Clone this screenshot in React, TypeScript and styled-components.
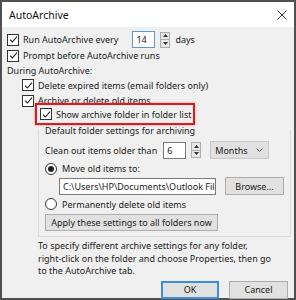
import React from "react";
import styled, { createGlobalStyle } from "styled-components";

const Global = createGlobalStyle`
  html, body { margin: 0; padding: 0; background: #fff; }
  body { font-family: "Noto Sans", "Open Sans", sans-serif; }
`;

const Dialog = styled.div`
  width: 296px;
  height: 300px;
  box-sizing: border-box;
  border: 2px solid #505050;
  background: #f0f0f0;
  display: flex;
  flex-direction: column;
  font-size: 9px;
  color: #1b1b1b;
`;

const TitleBar = styled.div`
  height: 25px;
  background: #fff;
  display: flex;
  align-items: center;
  justify-content: space-between;
  padding: 0 7px 0 7px;
  font-size: 10.5px;
  color: #111;
  flex-shrink: 0;
`;

const Body = styled.div`
  display: flex;
  flex-direction: column;
  padding: 4px 0 0 5px;
`;

const Row = styled.div<{ $indent?: number; $h?: number; $mt?: number }>`
  display: flex;
  align-items: center;
  height: ${(p) => p.$h ?? 16}px;
  margin-left: ${(p) => p.$indent ?? 0}px;
  margin-top: ${(p) => p.$mt ?? 0}px;
  white-space: nowrap;
  gap: 3px;
`;

const Box = styled.span`
  width: 10px;
  height: 10px;
  border: 1px solid #333;
  background: #fff;
  display: inline-flex;
  align-items: center;
  justify-content: center;
  flex-shrink: 0;
  margin-right: 1px;
`;

const Radio = styled.span<{ $on?: boolean }>`
  width: 10px;
  height: 10px;
  border: 1px solid #333;
  border-radius: 50%;
  background: #fff;
  display: inline-flex;
  align-items: center;
  justify-content: center;
  flex-shrink: 0;
  margin-right: 2px;
  &::after {
    content: "";
    display: ${(p) => (p.$on ? "block" : "none")};
    width: 6px;
    height: 6px;
    border-radius: 50%;
    background: #222;
  }
`;

const Check = () => (
  <Box>
    <svg width="9" height="9" viewBox="0 0 9 9">
      <path d="M1 4.6 L3.4 7 L8 1.6" fill="none" stroke="#222" strokeWidth="1.1" />
    </svg>
  </Box>
);

const Input = styled.div<{ $w: number; $focus?: boolean }>`
  width: ${(p) => p.$w}px;
  height: 17px;
  box-sizing: border-box;
  border: 1px solid ${(p) => (p.$focus ? "#5b9bd5" : "#7a7a7a")};
  background: #fff;
  display: flex;
  align-items: center;
  padding-left: 3px;
  overflow: hidden;
  white-space: nowrap;
  flex-shrink: 0;
`;

const Spin = styled.div`
  width: 10px;
  height: 16px;
  box-sizing: border-box;
  border: 1px solid #adadad;
  background: #e8e8e8;
  display: flex;
  flex-direction: column;
  margin-left: 2px;
`;

const SpinHalf = styled.div`
  flex: 1;
  display: flex;
  align-items: center;
  justify-content: center;
  & + & { border-top: 1px solid #adadad; }
`;

const Spinner = () => (
  <Spin>
    <SpinHalf>
      <svg width="5" height="3" viewBox="0 0 5 3"><path d="M0 3 L2.5 0 L5 3Z" fill="#333" /></svg>
    </SpinHalf>
    <SpinHalf>
      <svg width="5" height="3" viewBox="0 0 5 3"><path d="M0 0 L2.5 3 L5 0Z" fill="#333" /></svg>
    </SpinHalf>
  </Spin>
);

const Button = styled.div<{ $w: number; $default?: boolean; $h?: number }>`
  width: ${(p) => p.$w}px;
  height: ${(p) => p.$h ?? 18}px;
  box-sizing: border-box;
  border: ${(p) => (p.$default ? "2px solid #3c8fdc" : "1px solid #adadad")};
  background: #e1e1e1;
  display: flex;
  align-items: center;
  justify-content: center;
  flex-shrink: 0;
  white-space: nowrap;
`;

const Select = styled.div`
  width: 59px;
  height: 18px;
  box-sizing: border-box;
  border: 1px solid #c8c8c8;
  background: #e1e1e1;
  display: flex;
  align-items: center;
  justify-content: space-between;
  padding: 0 5px 0 4px;
  margin-left: 6px;
`;

const Highlight = styled.div`
  display: flex;
  align-items: center;
  gap: 3px;
  width: 160px;
  height: 22px;
  box-sizing: border-box;
  border: 2px solid #e0191f;
  box-shadow: 0 0 2px rgba(224, 25, 31, 0.5);
  margin: -5px 0 0 28px;
  padding-left: 3px;
  white-space: nowrap;
  position: relative;
`;

const Group = styled.div`
  margin: 4px 0 0 31px;
  width: 253px;
  height: 108px;
  box-sizing: border-box;
  border: 1px solid #dcdcdc;
  border-top-color: transparent;
  display: flex;
  flex-direction: column;
  padding: 0 0 0 6px;
`;

const Legend = styled.div`
  height: 14px;
  margin-top: -7px;
  display: flex;
  align-items: center;
  white-space: nowrap;
`;

const Note = styled.div`
  margin: 3px 0 0 31px;
  line-height: 12.5px;
`;

const Footer = styled.div`
  display: flex;
  justify-content: flex-end;
  gap: 10px;
  padding-right: 6px;
  margin-top: 3px;
`;

export default function App() {
  return (
    <>
      <Global />
      <Dialog>
        <TitleBar>
          <span>AutoArchive</span>
          <svg width="10" height="10" viewBox="0 0 10 10">
            <path d="M0.5 0.5 L9.5 9.5 M9.5 0.5 L0.5 9.5" stroke="#333" strokeWidth="1" />
          </svg>
        </TitleBar>
        <Body>
          <Row $h={17}>
            <Check />
            <span>Run AutoArchive every</span>
            <Input $w={23} $focus style={{ marginLeft: 11 }}>14</Input>
            <Spinner />
            <span style={{ marginLeft: 2 }}>days</span>
          </Row>
          <Row $h={15}>
            <Check />
            <span>Prompt before AutoArchive runs</span>
          </Row>
          <Row $h={14}>During AutoArchive:</Row>
          <Row $h={16} $indent={15}>
            <Check />
            <span>Delete expired items (email folders only)</span>
          </Row>
          <Row $h={15} $indent={15}>
            <Check />
            <span>Archive or delete old items</span>
          </Row>
          <Highlight>
            <Check />
            <span>Show archive folder in folder list</span>
          </Highlight>
          <Group>
            <Legend>Default folder settings for archiving</Legend>
            <Row $h={20} $mt={3}>
              <span>Clean out items older than</span>
              <Input $w={23} style={{ marginLeft: 3 }}>6</Input>
              <Spinner />
              <Select>
                <span>Months</span>
                <svg width="7" height="4" viewBox="0 0 7 4">
                  <path d="M0.5 0.5 L3.5 3.5 L6.5 0.5" fill="none" stroke="#555" strokeWidth="1" />
                </svg>
              </Select>
            </Row>
            <Row $h={17}>
              <Radio $on />
              <span>Move old items to:</span>
            </Row>
            <Row $h={18} $indent={14} style={{ gap: 9 }}>
              <Input $w={157}>C:\Users\HP\Documents\Outlook Files</Input>
              <Button $w={59}>Browse...</Button>
            </Row>
            <Row $h={18}>
              <Radio />
              <span>Permanently delete old items</span>
            </Row>
            <Row $h={18} $mt={0}>
              <Button $w={173} $h={17}>Apply these settings to all folders now</Button>
            </Row>
          </Group>
          <Note>
            To specify different archive settings for any folder,
            <br />
            right-click on the folder and choose Properties, then go
            <br />
            to the AutoArchive tab.
          </Note>
          <Footer>
            <Button $w={58} $default>OK</Button>
            <Button $w={59}>Cancel</Button>
          </Footer>
        </Body>
      </Dialog>
    </>
  );
}
